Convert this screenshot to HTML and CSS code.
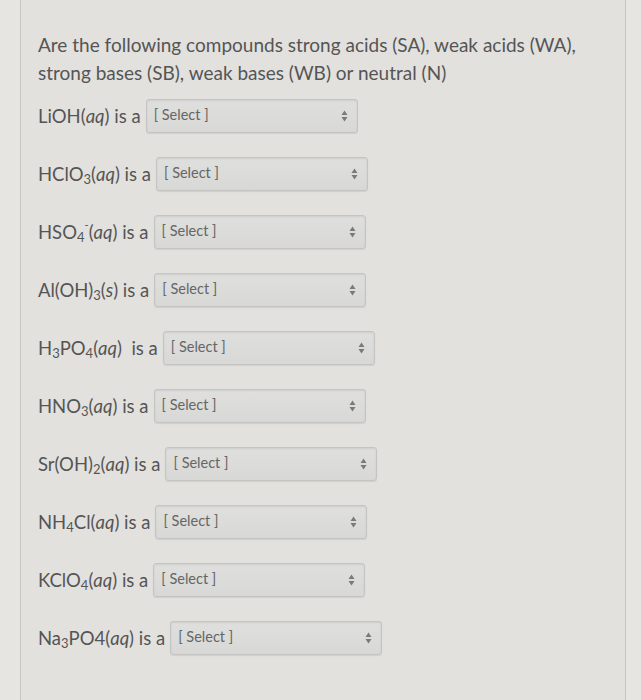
FILE: index.html
```html
<!DOCTYPE html>
<html>
<head>
<meta charset="utf-8">
<link rel="stylesheet" href="styles.css">
</head>
<body>
<div class="panel">
  <p class="question">Are the following compounds strong acids (SA), weak acids (WA), strong bases (SB), weak bases (WB) or neutral (N)</p>
  <div class="rows">
    <div class="row"><span class="label">LiOH(<i>aq</i>) is a</span><div class="select"><span>[ Select ]</span><svg class="arrows" width="7" height="12" viewBox="0 0 7 12"><path d="M3.5 0.5L6.5 5H0.5Z M3.5 11.5L6.5 7H0.5Z" fill="#7a7a7a"/></svg></div></div>
    <div class="row"><span class="label">HClO<sub>3</sub>(<i>aq</i>) is a</span><div class="select"><span>[ Select ]</span><svg class="arrows" width="7" height="12" viewBox="0 0 7 12"><path d="M3.5 0.5L6.5 5H0.5Z M3.5 11.5L6.5 7H0.5Z" fill="#7a7a7a"/></svg></div></div>
    <div class="row"><span class="label">HSO<sub class="ion">4<sup>-</sup></sub>(<i>aq</i>) is a</span><div class="select"><span>[ Select ]</span><svg class="arrows" width="7" height="12" viewBox="0 0 7 12"><path d="M3.5 0.5L6.5 5H0.5Z M3.5 11.5L6.5 7H0.5Z" fill="#7a7a7a"/></svg></div></div>
    <div class="row"><span class="label">Al(OH)<sub>3</sub>(<i>s</i>) is a</span><div class="select"><span>[ Select ]</span><svg class="arrows" width="7" height="12" viewBox="0 0 7 12"><path d="M3.5 0.5L6.5 5H0.5Z M3.5 11.5L6.5 7H0.5Z" fill="#7a7a7a"/></svg></div></div>
    <div class="row"><span class="label">H<sub>3</sub>PO<sub>4</sub>(<i>aq</i>)&nbsp; is a</span><div class="select"><span>[ Select ]</span><svg class="arrows" width="7" height="12" viewBox="0 0 7 12"><path d="M3.5 0.5L6.5 5H0.5Z M3.5 11.5L6.5 7H0.5Z" fill="#7a7a7a"/></svg></div></div>
    <div class="row"><span class="label">HNO<sub>3</sub>(<i>aq</i>) is a</span><div class="select"><span>[ Select ]</span><svg class="arrows" width="7" height="12" viewBox="0 0 7 12"><path d="M3.5 0.5L6.5 5H0.5Z M3.5 11.5L6.5 7H0.5Z" fill="#7a7a7a"/></svg></div></div>
    <div class="row"><span class="label">Sr(OH)<sub>2</sub>(<i>aq</i>) is a</span><div class="select"><span>[ Select ]</span><svg class="arrows" width="7" height="12" viewBox="0 0 7 12"><path d="M3.5 0.5L6.5 5H0.5Z M3.5 11.5L6.5 7H0.5Z" fill="#7a7a7a"/></svg></div></div>
    <div class="row"><span class="label">NH<sub>4</sub>Cl(<i>aq</i>) is a</span><div class="select"><span>[ Select ]</span><svg class="arrows" width="7" height="12" viewBox="0 0 7 12"><path d="M3.5 0.5L6.5 5H0.5Z M3.5 11.5L6.5 7H0.5Z" fill="#7a7a7a"/></svg></div></div>
    <div class="row"><span class="label">KClO<sub>4</sub>(<i>aq</i>) is a</span><div class="select"><span>[ Select ]</span><svg class="arrows" width="7" height="12" viewBox="0 0 7 12"><path d="M3.5 0.5L6.5 5H0.5Z M3.5 11.5L6.5 7H0.5Z" fill="#7a7a7a"/></svg></div></div>
    <div class="row"><span class="label">Na<sub>3</sub>PO4(<i>aq</i>) is a</span><div class="select"><span>[ Select ]</span><svg class="arrows" width="7" height="12" viewBox="0 0 7 12"><path d="M3.5 0.5L6.5 5H0.5Z M3.5 11.5L6.5 7H0.5Z" fill="#7a7a7a"/></svg></div></div>
  </div>
</div>
</body>
</html>
```
FILE: styles.css
```css
html, body {
  margin: 0;
  padding: 0;
  background: #e6e5e1;
  font-family: Lato, "Open Sans", sans-serif;
  color: #555555;
}
.panel {
  margin-left: 20px;
  width: 606px;
  height: 700px;
  box-sizing: border-box;
  border-left: 1px solid #c6c6c3;
  border-right: 1px solid #c6c6c3;
  background: #e2e1de;
  padding: 31px 0 0 17px;
}
.question {
  margin: 0;
  font-size: 19px;
  line-height: 28px;
  width: 570px;
}
.rows {
  margin-top: 12px;
  display: flex;
  flex-direction: column;
  gap: 24px;
}
.row {
  display: flex;
  align-items: center;
  height: 34px;
}
.label {
  font-size: 18.5px;
  white-space: nowrap;
  margin-right: 5px;
}
.label i {
  font-style: italic;
}
.label sub {
  font-size: 13px;
  vertical-align: -3px;
  line-height: 0;
}
.label sub.ion sup {
  font-size: 11px;
  vertical-align: 13px;
  line-height: 0;
}
.select {
  width: 212px;
  height: 34px;
  box-sizing: border-box;
  border: 1px solid #c4c4c2;
  border-radius: 3px;
  background: linear-gradient(#dfdfdd, #d8d8d6);
  box-shadow: inset 0 1px 2px rgba(0,0,0,0.08), 0 1px 1px rgba(0,0,0,0.08);
  display: flex;
  align-items: center;
  justify-content: space-between;
  padding: 0 9px 0 7px;
  font-size: 14.5px;
  color: #666;
}
.select span {
  margin-top: -3px;
}
.arrows {
  display: block;
}
```
